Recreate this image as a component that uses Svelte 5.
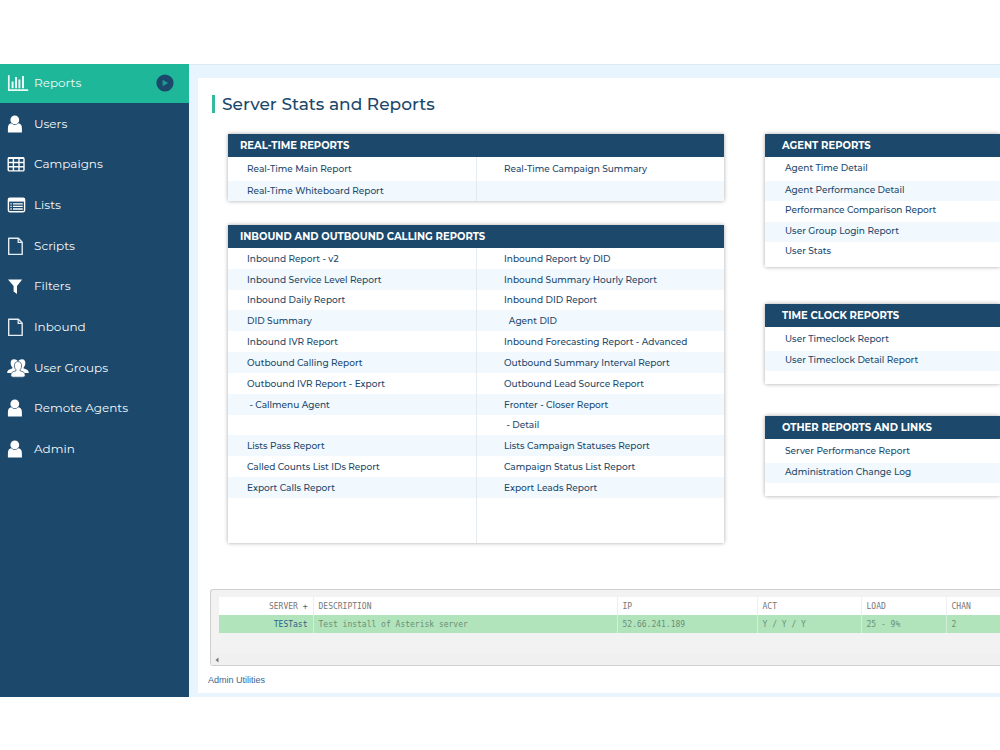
<script>
  const nav = [
    { label: 'Reports', icon: 'chart' },
    { label: 'Users', icon: 'user' },
    { label: 'Campaigns', icon: 'grid' },
    { label: 'Lists', icon: 'list' },
    { label: 'Scripts', icon: 'file' },
    { label: 'Filters', icon: 'filter' },
    { label: 'Inbound', icon: 'file' },
    { label: 'User Groups', icon: 'group' },
    { label: 'Remote Agents', icon: 'user' },
    { label: 'Admin', icon: 'user' }
  ];

  const realtime = [
    ['Real-Time Main Report', 'Real-Time Campaign Summary'],
    ['Real-Time Whiteboard Report', '']
  ];

  const calling = [
    ['Inbound Report - v2', 'Inbound Report by DID'],
    ['Inbound Service Level Report', 'Inbound Summary Hourly Report'],
    ['Inbound Daily Report', 'Inbound DID Report'],
    ['DID Summary', '\u00a0\u00a0Agent DID'],
    ['Inbound IVR Report', 'Inbound Forecasting Report - Advanced'],
    ['Outbound Calling Report', 'Outbound Summary Interval Report'],
    ['Outbound IVR Report - Export', 'Outbound Lead Source Report'],
    ['\u00a0- Callmenu Agent', 'Fronter - Closer Report'],
    ['', '\u00a0- Detail'],
    ['Lists Pass Report', 'Lists Campaign Statuses Report'],
    ['Called Counts List IDs Report', 'Campaign Status List Report'],
    ['Export Calls Report', 'Export Leads Report']
  ];

  const side = [
    {
      title: 'AGENT REPORTS',
      kind: 'agent',
      links: ['Agent Time Detail', 'Agent Performance Detail', 'Performance Comparison Report', 'User Group Login Report', 'User Stats']
    },
    { title: 'TIME CLOCK REPORTS', kind: 'short', links: ['User Timeclock Report', 'User Timeclock Detail Report'] },
    { title: 'OTHER REPORTS AND LINKS', kind: 'short', links: ['Server Performance Report', 'Administration Change Log'] }
  ];
</script>

{#snippet icon(name)}
  <svg class="icon" viewBox="0 0 22 20" aria-hidden="true">
    {#if name === 'chart'}
      <path d="M1.8 2.3V17.2H21.2" fill="none" stroke="#e9fbf6" stroke-width="1.7" />
      <path d="M5.6 8.5V15.2M9 4V15.2M12.4 6.5V15.2M16 3V15.2" fill="none" stroke="#e9fbf6" stroke-width="2" />
    {:else if name === 'user'}
      <ellipse cx="7.8" cy="5.9" rx="4.4" ry="4.4" />
      <path d="M0.9 18.5V14.5Q0.9 9.4 4.2 9.2Q7.8 12.6 11.4 9.2Q14.9 9.4 14.9 14.5V18.5Z" />
    {:else if name === 'grid'}
      <rect x="1.2" y="3.7" width="15.8" height="13.2" rx="1.2" fill="none" stroke="#fff" stroke-width="1.4" />
      <path d="M1 4.3H17M1 8.5H17M1 12.7H17M6.4 4V17M12 4V17" stroke="#fff" stroke-width="1.4" />
    {:else if name === 'list'}
      <rect x="1.4" y="3.3" width="16.2" height="13.4" rx="1.4" fill="none" stroke="#fff" stroke-width="1.4" />
      <path d="M1.2 5H17.8" stroke="#fff" stroke-width="3.2" />
      <path d="M3.4 8.8H4.8M6 8.8H15.8M3.4 11.4H4.8M6 11.4H15.8M3.4 14H4.8M6 14H15.8" stroke="#fff" stroke-width="1.3" />
    {:else if name === 'file'}
      <path d="M1.7 2.2H11.4L15.2 6.2V18.4H1.7Z" fill="none" stroke="#e4edf3" stroke-width="1.4" stroke-linejoin="round" />
      <path d="M11.2 2.4V6.4H15" fill="none" stroke="#e4edf3" stroke-width="1.3" />
    {:else if name === 'filter'}
      <path d="M1 3.6H15.2L10 10V18L6.6 15.4V10Z" />
    {:else}
      <path
        d="M7 1.2C4.6 1.2 3.4 3 3.7 5.6C3.8 7.4 4.4 8.6 5.3 9.3V10.4C2.3 11.2 0.2 12 0.2 15H21.8C21.8 12 19.7 11.2 16.7 10.4V9.3C17.6 8.6 18.2 7.4 18.3 5.6C18.6 3 17.4 1.2 15 1.2C13.2 1.2 12 2 11 3.2C10 2 8.8 1.2 7 1.2Z"
      />
      <path
        d="M11 3.6C8.5 3.6 7.2 5.5 7.4 8C7.5 9.8 8.2 11 9 11.8V12.8C6 13.5 3.8 14.5 3.8 17.2Q3.8 19.2 6 19.2H16Q18.2 19.2 18.2 17.2C18.2 14.5 16 13.5 13 12.8V11.8C13.8 11 14.5 9.8 14.6 8C14.8 5.5 13.5 3.6 11 3.6Z"
        stroke="#1b486b"
        stroke-width="0.7"
      />
    {/if}
  </svg>
{/snippet}

{#snippet pairs(rows)}
  <table class="pairs">
    <tbody>
      {#each rows as row}
        <tr>
          {#each row as text}
            <td>{#if text}<a href="#report">{text}</a>{/if}</td>
          {/each}
        </tr>
      {/each}
    </tbody>
  </table>
{/snippet}

<div class="app">
  <nav class="sidebar" aria-label="Main">
    {#each nav as item, i}
      <a class="nav-item" class:active={i === 0} href="#{item.label}">
        {@render icon(item.icon)}
        <span>{item.label}</span>
        {#if i === 0}
          <svg class="play" viewBox="0 0 18 18" aria-hidden="true">
            <circle cx="9" cy="9" r="8.6" fill="#1b486b" />
            <path d="M6.6 5.8L12.2 9L6.6 12.2Z" fill="#1c9c94" />
          </svg>
        {/if}
      </a>
    {/each}
  </nav>

  <main>
    <div class="panel">
      <h1>Server Stats and Reports</h1>
      <div class="columns">
        <div class="left">
          <section class="card realtime">
            <h2>REAL-TIME REPORTS</h2>
            {@render pairs(realtime)}
          </section>
          <section class="card calling">
            <h2>INBOUND AND OUTBOUND CALLING REPORTS</h2>
            {@render pairs(calling)}
            <div class="blank"></div>
          </section>
        </div>
        <div class="right">
          {#each side as group}
            <section class="card {group.kind}">
              <h2>{group.title}</h2>
              <ul>
                {#each group.links as text}
                  <li><a href="#report">{text}</a></li>
                {/each}
              </ul>
            </section>
          {/each}
        </div>
      </div>

      <div class="servers">
        <table>
          <colgroup>
            <col class="c-server" /><col /><col class="c-ip" /><col class="c-act" /><col class="c-load" /><col class="c-chan" />
          </colgroup>
          <thead>
            <tr><th>SERVER <a href="#add">+</a></th><th>DESCRIPTION</th><th>IP</th><th>ACT</th><th>LOAD</th><th>CHAN</th></tr>
          </thead>
          <tbody>
            <tr>
              <td><a href="#server">TESTast</a></td>
              <td>Test install of Asterisk server</td>
              <td>52.66.241.189</td>
              <td>Y / Y / Y</td>
              <td>25 - 9%</td>
              <td>2</td>
            </tr>
          </tbody>
        </table>
        <div class="track">
          <svg viewBox="0 0 4 6" aria-hidden="true"><path d="M3.5 0.5V5.5L0.5 3Z" fill="#777" /></svg>
        </div>
      </div>
      <a class="utilities" href="#utilities">Admin Utilities</a>
    </div>
  </main>
</div>

<style>
  :global(body) {
    background: #fff;
    overflow-x: hidden;
  }
  a {
    color: inherit;
    text-decoration: none;
  }
  .app {
    display: flex;
    margin: 64px 0 53px;
    font-family: Montserrat, Inter, sans-serif;
    color: #1b486b;
  }
  .sidebar {
    flex: 0 0 189px;
    background: #1b486b;
  }
  .nav-item {
    display: flex;
    align-items: center;
    gap: 5px;
    box-sizing: border-box;
    height: 41px;
    padding: 0 15px 0 7px;
    color: #f4f8fa;
    font-size: 12px;
    font-weight: 400;
    line-height: 18px;
  }
  .nav-item:nth-child(3n) {
    height: 40px;
  }
  .nav-item.active {
    height: 39px;
    padding-bottom: 2px;
    background: #1eb799;
  }
  .icon {
    width: 22px;
    height: 20px;
    fill: #fff;
  }
  .play {
    width: 18px;
    height: 18px;
    margin-left: auto;
  }
  main {
    flex: 1;
    min-width: 0;
    box-sizing: border-box;
    padding: 13px 0 4px 9px;
    background: #e9f5fe;
    border-top: 1px solid #e0e8ef;
  }
  .panel {
    background: #fff;
    padding: 17px 0 6px 12px;
  }
  h1 {
    margin: 0 0 21px 2px;
    padding-left: 7px;
    border-left: 3px solid #35b99d;
    font-size: 17px;
    font-weight: 500;
    line-height: 18px;
  }
  .columns {
    display: grid;
    grid-template-columns: 496fr 235fr;
    column-gap: 41px;
    margin-left: 18px;
  }
  .left {
    display: flex;
    flex-direction: column;
    gap: 24px;
  }
  .right {
    display: flex;
    flex-direction: column;
    gap: 32px;
  }
  .card {
    background: #fff;
    box-shadow: 0 0 4px rgba(0, 0, 0, 0.35);
    font-size: 9px;
    font-weight: 500;
    line-height: 16px;
  }
  .right .card {
    clip-path: inset(-6px 0 -6px -6px);
  }
  .card.agent {
    margin-bottom: 5px;
  }
  h2 {
    margin: 0;
    padding: 1px 12px 0;
    background: #1b486b;
    color: #fff;
    font-size: 10px;
    font-weight: 700;
    line-height: 22px;
  }
  .right h2 {
    padding: 1px 17px 0;
  }
  .pairs {
    width: 100%;
    table-layout: fixed;
    border-collapse: collapse;
  }
  .pairs tr {
    height: 21px;
  }
  .calling tr:nth-child(6n + 3) {
    height: 20px;
  }
  .realtime tr:first-child {
    height: 24px;
  }
  .realtime tr:last-child {
    height: 20px;
  }
  .pairs tr:nth-child(even) {
    background: #f1f8fe;
  }
  .pairs td {
    padding: 0 0 0 19px;
    white-space: nowrap;
  }
  .pairs td + td {
    padding-left: 28px;
    box-shadow: inset 1px 0 #e4eaee;
  }
  .blank {
    height: 45px;
    width: 50%;
    margin-left: auto;
    box-shadow: inset 1px 0 #e4eaee;
  }
  ul {
    list-style: none;
    margin: 0;
    padding: 0 0 13px;
  }
  .agent ul {
    padding-bottom: 4px;
  }
  li {
    box-sizing: border-box;
    height: 20px;
    padding-left: 20px;
    line-height: 18px;
    white-space: nowrap;
  }
  li:nth-child(odd) {
    height: 21px;
  }
  li:first-child {
    height: 24px;
    padding-top: 3px;
  }
  .agent li:first-child {
    padding-top: 2px;
  }
  li:nth-child(even) {
    background: #f1f8fe;
  }
  .servers {
    margin-top: 46px;
    padding: 7px 0 0 8px;
    background: #f2f2f2;
    border: 1px solid #cfcfcf;
    border-right: 0;
    border-radius: 3px 0 0 3px;
    font-family: "DejaVu Sans Mono", monospace;
    font-size: 8px;
    line-height: 16px;
    color: #777;
  }
  .servers table {
    width: 100%;
    table-layout: fixed;
    border-collapse: collapse;
  }
  .c-server {
    width: 94px;
  }
  .c-ip {
    width: 140px;
  }
  .c-act {
    width: 104px;
  }
  .c-load {
    width: 85px;
  }
  .c-chan {
    width: 54px;
  }
  .servers th,
  .servers td {
    padding: 2px 5px 0;
    font-weight: 400;
    text-align: left;
    background: #fff;
    border-right: 1px solid #eeeff4;
    white-space: nowrap;
  }
  .servers td {
    background: #b1e4bb;
    border-right-color: #d5eddb;
    color: #6b8f76;
  }
  .servers th:first-child,
  .servers td:first-child {
    text-align: right;
  }
  .servers th:last-child,
  .servers td:last-child {
    border-right: 0;
  }
  .servers a {
    color: #2f5f86;
  }
  .track {
    display: flex;
    align-items: center;
    height: 11px;
    margin: 21px 0 0 -8px;
    padding-left: 4px;
    background: #f0f0f0;
  }
  .track svg {
    width: 4px;
    height: 6px;
  }
  .utilities {
    display: block;
    margin: 7px 0 0 -2px;
    font-family: "Liberation Sans", Arial, sans-serif;
    font-size: 9px;
    line-height: 14px;
    color: #3a6590;
  }
</style>
